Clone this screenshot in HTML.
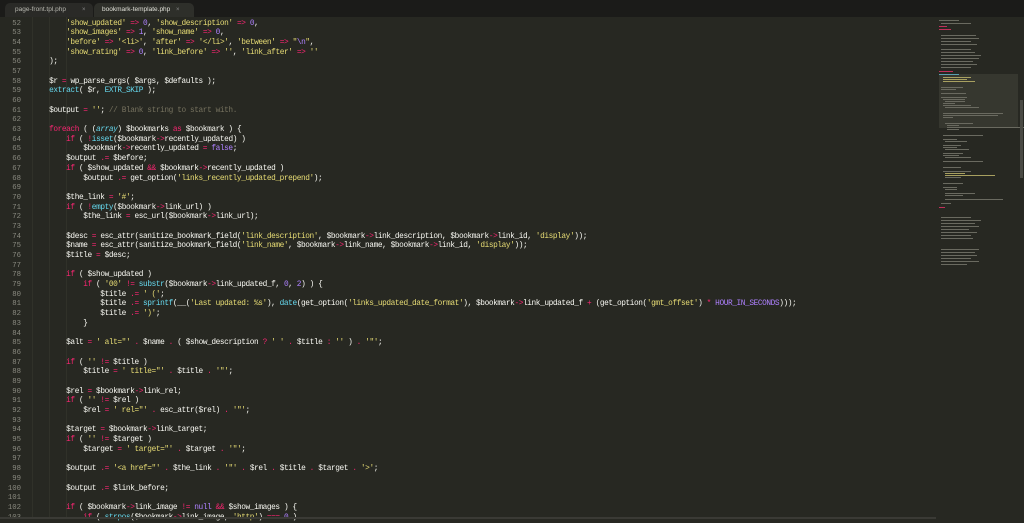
<!DOCTYPE html>
<html><head><meta charset="utf-8"><style>
*{margin:0;padding:0}
body{width:1024px;height:519px;overflow:hidden;background:#272822;position:relative;font-family:"Liberation Mono",monospace}
#tabs{position:absolute;left:0;top:0;width:1024px;height:17px;background:#1b1b19}
.tab{position:absolute;top:3px;height:14px;border-radius:5px 5px 0 0;font-family:"Liberation Sans",sans-serif;font-size:6.5px;line-height:14px;color:#b8b8b0}
.tab .x{position:absolute;top:0;color:#888;font-size:6px}
#gut{position:absolute;left:0;top:19.5px;width:21px;text-align:right;font-size:7.3px;line-height:9.68px;color:#8a8a80;white-space:pre}
#code{position:absolute;left:32px;top:19.5px;font-size:7.8px;letter-spacing:-0.41px;line-height:9.68px;color:#f8f8f2;white-space:pre}
.k{color:#f92672}.s{color:#e6db74}.n{color:#ae81ff}.f{color:#66d9ef}.c{color:#75715e}.i{color:#66d9ef;font-style:italic}
.g{position:absolute;top:17px;width:1px;height:502px;background:#303129}
</style></head><body>
<div id="tabs">
<div class="tab" style="left:5px;width:88px;background:#2a2a27;padding-left:10px;box-sizing:border-box">page-front.tpl.php<span class="x" style="left:77px">×</span></div>
<div class="tab" style="left:94px;width:100px;background:#2e2f2a;color:#e0e0d8;padding-left:8px;box-sizing:border-box">bookmark-template.php<span class="x" style="left:82px">×</span></div>
</div>
<div class="g" style="left:32px"></div><div class="g" style="left:49px"></div><div class="g" style="left:66px"></div>
<div id="gut">52
53
54
55
56
57
58
59
60
61
62
63
64
65
66
67
68
69
70
71
72
73
74
75
76
77
78
79
80
81
82
83
84
85
86
87
88
89
90
91
92
93
94
95
96
97
98
99
100
101
102
103</div>
<div id="code">        <span class="s">'show_updated'</span> <span class="k">=&gt;</span> <span class="n">0</span>, <span class="s">'show_description'</span> <span class="k">=&gt;</span> <span class="n">0</span>,
        <span class="s">'show_images'</span> <span class="k">=&gt;</span> <span class="n">1</span>, <span class="s">'show_name'</span> <span class="k">=&gt;</span> <span class="n">0</span>,
        <span class="s">'before'</span> <span class="k">=&gt;</span> <span class="s">'&lt;li&gt;'</span>, <span class="s">'after'</span> <span class="k">=&gt;</span> <span class="s">'&lt;/li&gt;'</span>, <span class="s">'between'</span> <span class="k">=&gt;</span> <span class="s">"</span><span class="n">\n</span><span class="s">"</span>,
        <span class="s">'show_rating'</span> <span class="k">=&gt;</span> <span class="n">0</span>, <span class="s">'link_before'</span> <span class="k">=&gt;</span> <span class="s">''</span>, <span class="s">'link_after'</span> <span class="k">=&gt;</span> <span class="s">''</span>
    );

    $r <span class="k">=</span> wp_parse_args( $args, $defaults );
    <span class="f">extract</span>( $r, <span class="f">EXTR_SKIP</span> );

    $output <span class="k">=</span> <span class="s">''</span>; <span class="c">// Blank string to start with.</span>

    <span class="k">foreach</span> ( (<span class="i">array</span>) $bookmarks <span class="k">as</span> $bookmark ) {
        <span class="k">if</span> ( <span class="k">!</span><span class="f">isset</span>($bookmark<span class="k">-&gt;</span>recently_updated) )
            $bookmark<span class="k">-&gt;</span>recently_updated <span class="k">=</span> <span class="n">false</span>;
        $output <span class="k">.=</span> $before;
        <span class="k">if</span> ( $show_updated <span class="k">&amp;&amp;</span> $bookmark<span class="k">-&gt;</span>recently_updated )
            $output <span class="k">.=</span> get_option(<span class="s">'links_recently_updated_prepend'</span>);

        $the_link <span class="k">=</span> <span class="s">'#'</span>;
        <span class="k">if</span> ( <span class="k">!</span><span class="f">empty</span>($bookmark<span class="k">-&gt;</span>link_url) )
            $the_link <span class="k">=</span> esc_url($bookmark<span class="k">-&gt;</span>link_url);

        $desc <span class="k">=</span> esc_attr(sanitize_bookmark_field(<span class="s">'link_description'</span>, $bookmark<span class="k">-&gt;</span>link_description, $bookmark<span class="k">-&gt;</span>link_id, <span class="s">'display'</span>));
        $name <span class="k">=</span> esc_attr(sanitize_bookmark_field(<span class="s">'link_name'</span>, $bookmark<span class="k">-&gt;</span>link_name, $bookmark<span class="k">-&gt;</span>link_id, <span class="s">'display'</span>));
        $title <span class="k">=</span> $desc;

        <span class="k">if</span> ( $show_updated )
            <span class="k">if</span> ( <span class="s">'00'</span> <span class="k">!=</span> <span class="f">substr</span>($bookmark<span class="k">-&gt;</span>link_updated_f, <span class="n">0</span>, <span class="n">2</span>) ) {
                $title <span class="k">.=</span> <span class="s">' ('</span>;
                $title <span class="k">.=</span> <span class="f">sprintf</span>(__(<span class="s">'Last updated: %s'</span>), <span class="f">date</span>(get_option(<span class="s">'links_updated_date_format'</span>), $bookmark<span class="k">-&gt;</span>link_updated_f <span class="k">+</span> (get_option(<span class="s">'gmt_offset'</span>) <span class="k">*</span> <span class="n">HOUR_IN_SECONDS</span>)));
                $title <span class="k">.=</span> <span class="s">')'</span>;
            }

        $alt <span class="k">=</span> <span class="s">' alt="'</span> <span class="k">.</span> $name <span class="k">.</span> ( $show_description <span class="k">?</span> <span class="s">' '</span> <span class="k">.</span> $title <span class="k">:</span> <span class="s">''</span> ) <span class="k">.</span> <span class="s">'"'</span>;

        <span class="k">if</span> ( <span class="s">''</span> <span class="k">!=</span> $title )
            $title <span class="k">=</span> <span class="s">' title="'</span> <span class="k">.</span> $title <span class="k">.</span> <span class="s">'"'</span>;

        $rel <span class="k">=</span> $bookmark<span class="k">-&gt;</span>link_rel;
        <span class="k">if</span> ( <span class="s">''</span> <span class="k">!=</span> $rel )
            $rel <span class="k">=</span> <span class="s">' rel="'</span> <span class="k">.</span> esc_attr($rel) <span class="k">.</span> <span class="s">'"'</span>;

        $target <span class="k">=</span> $bookmark<span class="k">-&gt;</span>link_target;
        <span class="k">if</span> ( <span class="s">''</span> <span class="k">!=</span> $target )
            $target <span class="k">=</span> <span class="s">' target="'</span> <span class="k">.</span> $target <span class="k">.</span> <span class="s">'"'</span>;

        $output <span class="k">.=</span> <span class="s">'&lt;a href="'</span> <span class="k">.</span> $the_link <span class="k">.</span> <span class="s">'"'</span> <span class="k">.</span> $rel <span class="k">.</span> $title <span class="k">.</span> $target <span class="k">.</span> <span class="s">'&gt;'</span>;

        $output <span class="k">.=</span> $link_before;

        <span class="k">if</span> ( $bookmark<span class="k">-&gt;</span>link_image <span class="k">!=</span> <span class="n">null</span> <span class="k">&amp;&amp;</span> $show_images ) {
            <span class="k">if</span> ( <span class="f">strpos</span>($bookmark<span class="k">-&gt;</span>link_image, <span class="s">'http'</span>) <span class="k">===</span> <span class="n">0</span> )</div>
<div style="position:absolute;left:0;top:517px;width:1024px;height:2px;background:#3a3a35"></div>
<svg style="position:absolute;left:936px;top:17px" width="88" height="502">
<rect x="0" y="0" width="88" height="502" fill="#272822"/>
<rect x="3" y="57" width="79" height="54" fill="#36372f"/>
<g fill="#6a6a60">
<rect x="3" y="3" width="20" height="1"/><rect x="5" y="6" width="30" height="1"/><rect x="3" y="9" width="8" height="1" fill="#c0305a"/><rect x="3" y="12" width="12" height="1" fill="#c0305a"/>
<rect x="5" y="18" width="35" height="1"/><rect x="5" y="21" width="38" height="1"/><rect x="5" y="24" width="30" height="1"/><rect x="5" y="27" width="36" height="1"/>
<rect x="5" y="32" width="30" height="1"/><rect x="5" y="35" width="34" height="1"/><rect x="5" y="38" width="40" height="1"/><rect x="5" y="41" width="38" height="1"/><rect x="5" y="44" width="32" height="1"/><rect x="5" y="47" width="36" height="1"/><rect x="5" y="50" width="30" height="1"/>
<rect x="3" y="54" width="14" height="1" fill="#c0305a"/><rect x="3" y="57" width="20" height="1" fill="#5aa0b0"/>
<rect x="7" y="60" width="28" height="1" fill="#a8a060"/><rect x="7" y="62" width="24" height="1" fill="#a8a060"/><rect x="7" y="64" width="32" height="1" fill="#a8a060"/>
<rect x="5" y="70" width="22" height="1"/><rect x="5" y="72" width="15" height="1"/><rect x="5" y="76" width="25" height="1"/>
<rect x="5" y="80" width="26" height="1"/><rect x="7" y="82" width="22" height="1"/><rect x="9" y="84" width="20" height="1"/><rect x="7" y="86" width="12" height="1"/><rect x="7" y="88" width="28" height="1"/><rect x="9" y="90" width="34" height="1"/>
<rect x="7" y="96" width="60" height="1"/><rect x="7" y="98" width="55" height="1"/><rect x="7" y="100" width="10" height="1"/>
<rect x="9" y="106" width="28" height="1"/><rect x="11" y="108" width="12" height="1"/><rect x="11" y="110" width="78" height="1"/><rect x="11" y="112" width="12" height="1"/>
<rect x="7" y="118" width="40" height="1"/><rect x="7" y="122" width="14" height="1"/><rect x="9" y="124" width="22" height="1"/><rect x="7" y="128" width="18" height="1"/><rect x="7" y="130" width="14" height="1"/><rect x="9" y="132" width="24" height="1"/><rect x="7" y="136" width="20" height="1"/><rect x="7" y="138" width="16" height="1"/><rect x="9" y="140" width="26" height="1"/><rect x="7" y="144" width="40" height="1"/>
<rect x="7" y="150" width="18" height="1"/><rect x="7" y="154" width="28" height="1"/><rect x="9" y="156" width="20" height="1" fill="#a8a060"/><rect x="9" y="158" width="50" height="1" fill="#a8a060"/><rect x="9" y="160" width="16" height="1"/>
<rect x="7" y="166" width="20" height="1"/><rect x="7" y="170" width="14" height="1"/><rect x="9" y="172" width="12" height="1"/><rect x="9" y="176" width="30" height="1"/><rect x="9" y="178" width="18" height="1"/><rect x="9" y="182" width="58" height="1"/><rect x="5" y="186" width="10" height="1"/><rect x="3" y="190" width="6" height="1" fill="#c0305a"/>
<rect x="5" y="200" width="30" height="1"/><rect x="5" y="203" width="40" height="1"/><rect x="5" y="206" width="34" height="1"/><rect x="5" y="209" width="38" height="1"/><rect x="5" y="212" width="28" height="1"/><rect x="5" y="215" width="36" height="1"/><rect x="5" y="218" width="30" height="1"/><rect x="5" y="221" width="32" height="1"/>
<rect x="5" y="232" width="38" height="1"/><rect x="5" y="235" width="34" height="1"/><rect x="5" y="238" width="36" height="1"/><rect x="5" y="241" width="30" height="1"/><rect x="5" y="244" width="38" height="1"/><rect x="5" y="247" width="26" height="1"/>
</g>
<rect x="84" y="83" width="3" height="78" fill="#4a4a44"/>
</svg>
</body></html>
